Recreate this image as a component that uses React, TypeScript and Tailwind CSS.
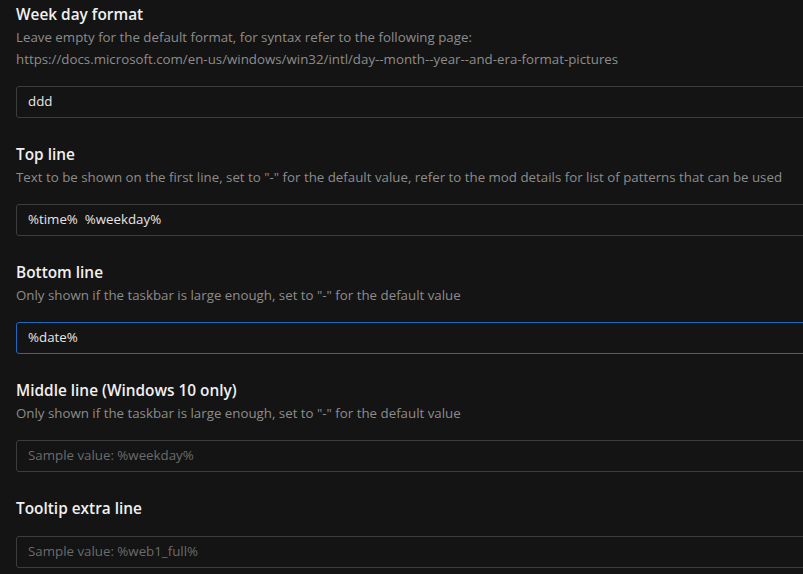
import React from "react";

type Field = {
  title: string;
  desc?: React.ReactNode;
  value?: string;
  placeholder?: string;
  focused?: boolean;
};

const fields: Field[] = [
  {
    title: "Week day format",
    desc: (
      <>
        Leave empty for the default format, for syntax refer to the following page:
        <br />
        https://docs.microsoft.com/en-us/windows/win32/intl/day--month--year--and-era-format-pictures
      </>
    ),
    value: "ddd",
  },
  {
    title: "Top line",
    desc: 'Text to be shown on the first line, set to "-" for the default value, refer to the mod details for list of patterns that can be used',
    value: "%time%  %weekday%",
  },
  {
    title: "Bottom line",
    desc: 'Only shown if the taskbar is large enough, set to "-" for the default value',
    value: "%date%",
    focused: true,
  },
  {
    title: "Middle line (Windows 10 only)",
    desc: 'Only shown if the taskbar is large enough, set to "-" for the default value',
    placeholder: "Sample value: %weekday%",
  },
  {
    title: "Tooltip extra line",
    placeholder: "Sample value: %web1_full%",
  },
];

export default function App() {
  return (
    <div
      className="w-[803px] h-[574px] overflow-hidden bg-[#141414] pl-4 pt-[4px]"
      style={{ fontFamily: '"Open Sans", "Noto Sans", sans-serif' }}
    >
      {fields.map((f, i) => (
        <div key={i} className="mb-[26px]">
          <div className="text-[15.4px] leading-[22px] font-semibold text-[#f0f0f0]">
            {f.title}
          </div>
          {f.desc && (
            <div className="text-[13.3px] leading-[22px] text-[#8c8c8c] whitespace-nowrap">
              {f.desc}
            </div>
          )}
          <div
            className={
              f.focused
                ? "mt-4 h-8 w-[900px] rounded-[3px] border border-[#1d69c0] flex items-center px-[11px] text-[13.3px]"
                : "mt-4 h-8 w-[900px] rounded-[3px] border border-[#3c3c3c] flex items-center px-[11px] text-[13.3px]"
            }
          >
            {f.value ? (
              <span className="text-[#e6e6e6] whitespace-pre">{f.value}</span>
            ) : (
              <span className="text-[#6b6b6b]">{f.placeholder}</span>
            )}
          </div>
        </div>
      ))}
    </div>
  );
}
